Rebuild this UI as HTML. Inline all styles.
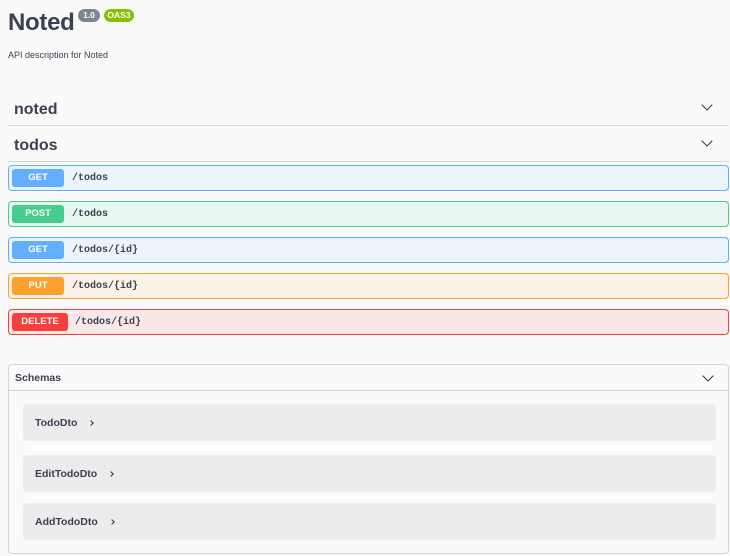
<!DOCTYPE html>
<html><head><style>
*{box-sizing:border-box;margin:0;padding:0}
body{width:730px;height:556px;background:#fafafa;font-family:"Liberation Sans",sans-serif;color:#3b4151;position:relative;overflow:hidden}
.a{position:absolute}
h1{position:absolute;left:8px;top:9px;font-size:24px;font-weight:bold;color:#3b4151;letter-spacing:-0.3px}
.badge{position:absolute;top:9px;height:13px;border-radius:7px;color:#fff;font-size:8.5px;font-weight:bold;line-height:13px;text-align:center}
.tag{position:absolute;left:8px;width:721px;border-bottom:1px solid rgba(59,65,81,.2);font-size:16px;font-weight:bold}
.tag span{position:absolute;left:6px}
.chev{position:absolute;right:18px;width:8px;height:8px;border-right:1.3px solid #333;border-bottom:1.3px solid #333;transform:rotate(45deg)}
.op{position:absolute;left:8px;width:721px;height:26px;border:1px solid;border-radius:4px}
.m{position:absolute;left:3px;top:3px;height:18px;border-radius:3px;color:#fff;font-size:9.5px;font-weight:bold;text-align:center;line-height:18px}
.p{position:absolute;top:7px;font-family:"Liberation Mono",monospace;font-weight:bold;font-size:10px;color:#3b4151}
.sch{position:absolute;left:8px;top:364px;width:721px;height:190px;border:1px solid rgba(59,65,81,.2);border-radius:4px}
.item{position:absolute;left:14px;width:693px;height:37px;background:#ececec;border-radius:4px;font-size:10.5px;font-weight:bold;line-height:38px;padding-left:12px}
.sc{display:inline-block;width:4px;height:4px;border-right:1.2px solid #333;border-bottom:1.2px solid #333;transform:rotate(-45deg);margin-left:12px;vertical-align:1px}
</style></head><body>
<h1>Noted</h1>
<div class="badge" style="left:78px;width:22px;background:#7d8492">1.0</div>
<div class="badge" style="left:104px;width:30px;background:#89bf04">OAS3</div>
<div class="a" style="left:8px;top:50px;font-size:9px">API description for Noted</div>

<div class="tag" style="top:92px;height:34px"><span style="top:9px">noted</span><div class="chev" style="top:9px"></div></div>
<div class="tag" style="top:128px;height:34px"><span style="top:9px">todos</span><div class="chev" style="top:9px"></div></div>

<div class="op" style="top:165px;background:#ebf3fb;border-color:#61affe"><div class="m" style="width:52px;background:#61affe">GET</div><div class="p" style="left:63px">/todos</div></div>
<div class="op" style="top:201px;background:#e8f6f0;border-color:#49cc90"><div class="m" style="width:52px;background:#49cc90">POST</div><div class="p" style="left:63px">/todos</div></div>
<div class="op" style="top:237px;background:#ebf3fb;border-color:#61affe"><div class="m" style="width:52px;background:#61affe">GET</div><div class="p" style="left:63px">/todos/{id}</div></div>
<div class="op" style="top:273px;background:#fbf1e6;border-color:#fca130"><div class="m" style="width:52px;background:#fca130">PUT</div><div class="p" style="left:63px">/todos/{id}</div></div>
<div class="op" style="top:309px;background:#fae7e7;border-color:#f93e3e"><div class="m" style="width:56px;background:#f93e3e">DELETE</div><div class="p" style="left:66px">/todos/{id}</div></div>

<div class="sch">
<div class="a" style="left:0;top:0;width:719px;height:26px;border-bottom:1px solid rgba(59,65,81,.2)"><span class="a" style="left:6px;top:7px;font-size:10.5px;font-weight:bold">Schemas</span><div class="chev" style="right:16px;top:7px"></div></div>
<div class="item" style="top:39px">TodoDto<span class="sc"></span></div>
<div class="item" style="top:90px">EditTodoDto<span class="sc"></span></div>
<div class="item" style="top:138px">AddTodoDto<span class="sc"></span></div>
</div>
</body></html>
